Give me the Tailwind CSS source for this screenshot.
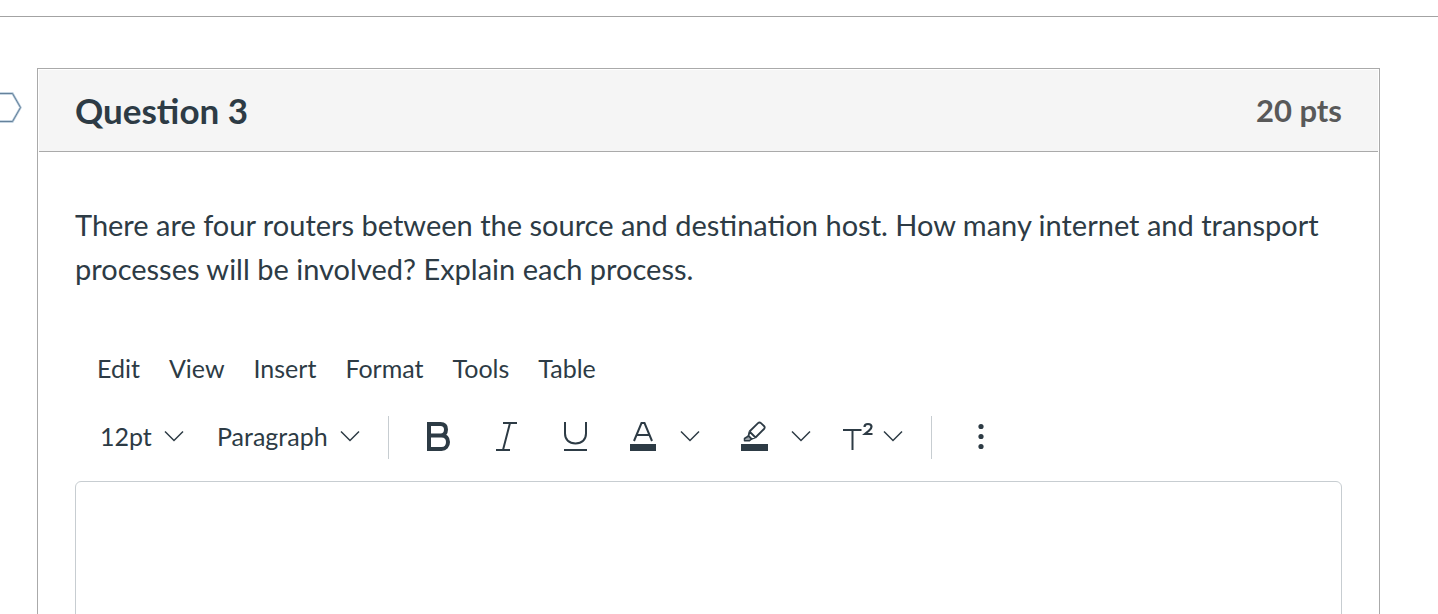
<!DOCTYPE html>
<html lang="en">
<head>
    <meta charset="UTF-8">
    <meta name="viewport" content="width=device-width, initial-scale=1.0">
    <title>Quiz - Question 3</title>
    <script src="https://cdn.jsdelivr.net/npm/@tailwindcss/browser@4"></script>
</head>
<body class="h-screen overflow-hidden bg-white pt-4 font-['Lato',sans-serif] text-[#2d3b45]">
    <main class="flex items-start border-t border-[#a3a3a3] pt-[51px] pr-[58px]">
        <button type="button" aria-label="Flag question" class="mt-6 w-[37px] shrink-0">
            <svg class="block" width="22" height="31" viewBox="0 0 22 31" fill="none">
                <path d="M-2 1.5H12.5L20.5 15.5L12.5 29.5H-2" stroke="#b4c8d9" stroke-width="2.4"/>
                <path d="M-2 1.5H12.5L20.5 15.5L12.5 29.5H-2" stroke="#65829b" stroke-width="1"/>
            </svg>
        </button>

        <section class="min-w-0 grow border border-[#aaaaaa] p-px">
            <header class="flex h-[82px] items-center justify-between border-b border-[#aaaaaa] bg-[#f5f5f5] px-9 pb-0.5">
                <h1 class="text-[35px] leading-[40px] font-bold">Question 3</h1>
                <span class="text-[31px] leading-[40px] font-bold text-[#595959]">20 pts</span>
            </header>

            <div class="px-9 pt-[51px]">
                <p class="text-[29px] leading-[44px]">There are four routers between the source and destination host. How many internet and transport processes will be involved? Explain each process.</p>

                <nav class="mt-[59px] flex gap-[29px] px-[22px] text-[25px] leading-[36px]">
                    <button type="button">Edit</button>
                    <button type="button">View</button>
                    <button type="button">Insert</button>
                    <button type="button">Format</button>
                    <button type="button">Tools</button>
                    <button type="button">Table</button>
                </nav>

                <div class="mt-[30px] flex h-[43px] items-center pl-[25px] text-[25px]">
                    <label class="flex items-center gap-3">
                        <select aria-label="Font size" class="appearance-none pb-0.5">
                            <option>12pt</option>
                        </select>
                        <svg width="20" height="15" viewBox="0 0 20 15" fill="none" stroke="#2d3b45" stroke-width="1.5"><path d="M1 1.5L10 10.5L19 1.5"/></svg>
                    </label>
                    <label class="ml-[33px] flex items-center gap-3">
                        <select aria-label="Block format" class="appearance-none pb-0.5">
                            <option>Paragraph</option>
                        </select>
                        <svg width="20" height="15" viewBox="0 0 20 15" fill="none" stroke="#2d3b45" stroke-width="1.5"><path d="M1 1.5L10 10.5L19 1.5"/></svg>
                    </label>

                    <div class="ml-7 h-full border-l border-[#c7cdd1]"></div>

                    <button type="button" aria-label="Bold" class="ml-9">
                        <svg class="block" width="28" height="33" viewBox="0 0 28 33" fill="none" stroke="#2d3b45" stroke-width="4"><path d="M4 3H15.5C19 3 21 5 21 8.5C21 12 19 14.5 15.5 14.5H4M15.5 14.5H16.5C20.5 14.5 23 17 23 21C23 25 20.5 28 16.5 28H4M4 1V30"/></svg>
                    </button>
                    <button type="button" aria-label="Italic" class="ml-10">
                        <svg class="block" width="28" height="33" viewBox="0 0 28 33" fill="none" stroke="#2d3b45" stroke-width="2"><path d="M10 2H24M3 29H17M17 2L10 29"/></svg>
                    </button>
                    <button type="button" aria-label="Underline" class="ml-10">
                        <svg class="block" width="28" height="33" viewBox="0 0 28 33" fill="none" stroke="#2d3b45" stroke-width="2"><path d="M4 1V12.5C4 18.5 8 22.5 14.5 22.5S25 18.5 25 12.5V1M3 29H26"/></svg>
                    </button>
                    <button type="button" aria-label="Text color" class="ml-10">
                        <svg class="block" width="28" height="33" viewBox="0 0 28 33" fill="none" stroke="#2d3b45" stroke-width="2"><path d="M5 20L12.5 2H15.5L23 20M8 14H20"/><path d="M1 23H27V30H1Z" fill="#2d3b45" stroke="none"/></svg>
                    </button>
                    <button type="button" aria-label="Text color options" class="ml-[23px]">
                        <svg class="block" width="20" height="15" viewBox="0 0 20 15" fill="none" stroke="#2d3b45" stroke-width="1.5"><path d="M1 1.5L10 10.5L19 1.5"/></svg>
                    </button>
                    <button type="button" aria-label="Highlight color" class="ml-10">
                        <svg class="block" width="28" height="33" viewBox="0 0 28 33" fill="none" stroke="#2d3b45" stroke-width="1.8" stroke-linejoin="round"><path d="M9.5 10.5L18 2.2C19 1.3 20 1.3 21 2.2L24 5C25 6 25 7 24 8L15.5 16.5M9.5 10.5L15.5 16.5M9.5 10.5L8.5 15L11.5 18L15.5 16.5"/><path d="M8.5 15L4.500 17.5V19.800H9.5L11.5 18Z" fill="#9aa2a8" stroke-width="1.5"/><path d="M1 23H28V30H1Z" fill="#2d3b45" stroke="none"/></svg>
                    </button>
                    <button type="button" aria-label="Highlight color options" class="ml-[23px]">
                        <svg class="block" width="20" height="15" viewBox="0 0 20 15" fill="none" stroke="#2d3b45" stroke-width="1.5"><path d="M1 1.5L10 10.5L19 1.5"/></svg>
                    </button>
                    <button type="button" aria-label="Superscript and subscript" class="ml-8 flex items-center gap-[10px]">
                        <svg width="30" height="33" viewBox="0 0 30 33" fill="none" stroke="#2d3b45" stroke-width="2"><path d="M0 9H18.5M9.5 9V29"/><path d="M21.5 6C21.5 4 23 3 25 3S28.5 4 28.5 5.7C28.5 7.5 27 8.5 25.5 10L22 13H29.5" stroke-width="2.2"/></svg>
                        <svg width="20" height="15" viewBox="0 0 20 15" fill="none" stroke="#2d3b45" stroke-width="1.5"><path d="M1 1.5L10 10.5L19 1.5"/></svg>
                    </button>

                    <div class="ml-7 h-full border-l border-[#c7cdd1]"></div>

                    <button type="button" aria-label="More" class="ml-11">
                        <svg class="block" width="10" height="33" viewBox="0 0 10 33" fill="#2d3b45"><circle cx="5" cy="5.5" r="2.6"/><circle cx="5" cy="15.5" r="2.6"/><circle cx="5" cy="25.5" r="2.6"/></svg>
                    </button>
                </div>

                <textarea aria-label="Answer" class="mt-[22px] block h-96 w-full resize-none rounded-md border border-[#c7cdd1] p-4 text-[25px] outline-none"></textarea>
            </div>
        </section>
    </main>
</body>
</html>
